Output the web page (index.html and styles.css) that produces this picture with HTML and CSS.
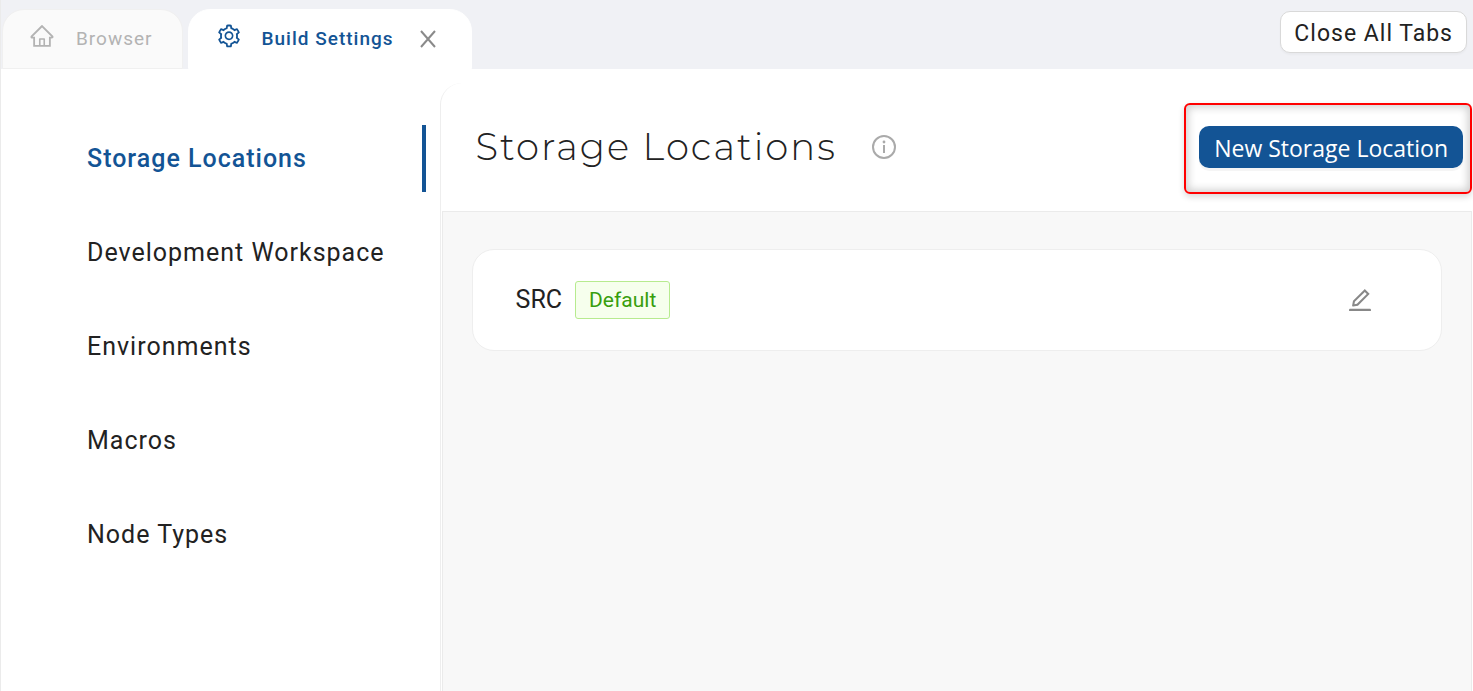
FILE: index.html
```html
<!DOCTYPE html>
<html lang="en">
<head>
<meta charset="utf-8">
<meta name="viewport" content="width=device-width, initial-scale=1">
<title>Build Settings</title>
<link rel="stylesheet" href="styles.css">
</head>
<body>
<div class="app">
  <header class="tabbar">
    <nav class="tabs" aria-label="Open tabs">
      <div class="tab">
        <svg class="tab-icon" viewBox="0 0 1024 1024" aria-hidden="true"><path d="M946.500 505L560.100 118.800l-25.900-25.900a31.500 31.500 0 0 0-44.400 0L77.500 505a63.900 63.900 0 0 0-18.800 46c.4 35.200 29.700 63.300 64.900 63.300h42.500V940h691.800V614.300h43.400c17.100 0 33.200-6.700 45.300-18.800a63.600 63.600 0 0 0 18.700-45.300c0-17-6.700-33.100-18.800-45.200zM568 868H456V664h112v204zm217.900-325.700V868H632V640c0-22.100-17.900-40-40-40H432c-22.100 0-40 17.900-40 40v228H238.100V542.300h-96l370-369.700 23.100 23.100L882 542.300h-96.100z"/></svg>
        <a class="tab-label" href="#browser">Browser</a>
      </div>
      <div class="tab tab-active">
        <svg class="tab-icon" viewBox="0 0 1024 1024" aria-hidden="true"><path d="M924.800 625.700l-65.500-56c3.100-19 4.700-38.400 4.700-57.800s-1.600-38.800-4.700-57.800l65.500-56a32.030 32.030 0 0 0 9.300-35.200l-.9-2.600a443.740 443.740 0 0 0-79.700-137.900l-1.800-2.100a32.120 32.120 0 0 0-35.100-9.500l-81.300 28.900c-30-24.600-63.500-44-99.700-57.600l-15.700-85a32.050 32.050 0 0 0-25.800-25.700l-2.700-.5c-52.100-9.400-106.900-9.400-159 0l-2.700.5a32.050 32.050 0 0 0-25.800 25.700l-15.800 85.400a351.860 351.860 0 0 0-99 57.400l-81.900-29.100a32 32 0 0 0-35.100 9.500l-1.800 2.100a446.020 446.020 0 0 0-79.700 137.900l-.9 2.600c-4.500 12.500-.8 26.500 9.300 35.200l66.300 56.600c-3.100 18.800-4.600 38-4.600 57.100 0 19.200 1.500 38.400 4.600 57.100L99 625.500a32.030 32.030 0 0 0-9.300 35.200l.9 2.600c18.100 50.400 44.900 96.900 79.700 137.900l1.800 2.100a32.120 32.120 0 0 0 35.100 9.500l81.900-29.100c29.800 24.500 63.100 43.900 99 57.400l15.800 85.400a32.050 32.050 0 0 0 25.800 25.700l2.700.5a449.400 449.400 0 0 0 159 0l2.700-.5a32.050 32.050 0 0 0 25.800-25.700l15.700-85a350 350 0 0 0 99.700-57.600l81.300 28.900a32 32 0 0 0 35.100-9.500l1.800-2.100c34.800-41.100 61.600-87.500 79.700-137.900l.9-2.600c4.500-12.300.8-26.300-9.300-35zM788.300 465.900c2.500 15.100 3.800 30.600 3.800 46.100s-1.300 31-3.800 46.100l-6.600 40.100 74.700 63.900a370.030 370.030 0 0 1-42.600 73.600L721 702.800l-31.400 25.800c-23.900 19.600-50.500 35-79.300 45.800l-38.100 14.300-17.900 97a377.500 377.500 0 0 1-85 0l-17.900-97.200-37.800-14.500c-28.500-10.800-55-26.200-78.700-45.700l-31.400-25.900-93.400 33.200c-17-22.900-31.200-47.600-42.600-73.600l75.500-64.500-6.500-40c-2.400-14.900-3.700-30.300-3.700-45.500 0-15.300 1.200-30.600 3.700-45.500l6.500-40-75.500-64.500c11.300-26.100 25.600-50.700 42.600-73.600l93.400 33.200 31.400-25.900c23.700-19.500 50.200-34.900 78.700-45.700l37.900-14.300 17.900-97.200c28.100-3.200 56.800-3.200 85 0l17.900 97 38.100 14.300c28.700 10.800 55.400 26.200 79.300 45.800l31.400 25.800 92.800-32.900c17 22.900 31.200 47.600 42.600 73.600L781.800 426l6.500 39.900zM512 326c-97.200 0-176 78.800-176 176s78.800 176 176 176 176-78.800 176-176-78.800-176-176-176zm79.200 255.200A111.600 111.600 0 0 1 512 614c-29.900 0-58-11.700-79.200-32.800A111.600 111.600 0 0 1 400 502c0-29.900 11.700-58 32.800-79.200C454 401.600 482.100 390 512 390c29.900 0 58 11.600 79.200 32.800A111.600 111.600 0 0 1 624 502c0 29.900-11.700 58-32.800 79.200z"/></svg>
        <a class="tab-label" href="#build-settings" aria-current="page">Build Settings</a>
        <button class="icon-button tab-close" type="button" aria-label="Close tab">
          <svg viewBox="0 0 16 18" width="16" height="18" aria-hidden="true"><path d="M1 1L15 17M15 1L1 17" fill="none" stroke="currentColor" stroke-width="2"/></svg>
        </button>
      </div>
    </nav>
    <button class="close-all" type="button">Close All Tabs</button>
  </header>

  <div class="workspace">
    <aside class="sidebar">
      <nav aria-label="Build settings">
        <ul class="menu">
          <li><a class="menu-item menu-item-active" href="#storage" aria-current="page">Storage Locations</a></li>
          <li><a class="menu-item" href="#workspace">Development Workspace</a></li>
          <li><a class="menu-item" href="#environments">Environments</a></li>
          <li><a class="menu-item" href="#macros">Macros</a></li>
          <li><a class="menu-item" href="#node-types">Node Types</a></li>
        </ul>
      </nav>
    </aside>

    <main class="panel">
      <div class="panel-head">
        <h1 class="title">Storage Locations</h1>
        <button class="icon-button info" type="button" aria-label="About storage locations">
          <svg viewBox="0 0 26 26" width="26" height="26" aria-hidden="true"><circle cx="13" cy="13" r="11" fill="none" stroke="currentColor" stroke-width="2"/><circle cx="13" cy="8" r="1.400" fill="currentColor"/><path d="M12 11h2v8h-2z" fill="currentColor"/></svg>
        </button>
        <div class="highlight">
          <button class="primary" type="button">New Storage Location</button>
        </div>
      </div>
      <div class="panel-body">
        <article class="card">
          <span class="card-name">SRC</span>
          <span class="tag">Default</span>
          <button class="icon-button edit" type="button" aria-label="Edit SRC">
            <svg viewBox="0 0 1024 1024" width="28" height="28" fill="currentColor" aria-hidden="true"><path d="M257.700 752c2 0 4-.2 6-.5L431.900 722c2-.4 3.900-1.300 5.300-2.800l423.900-423.900a9.960 9.960 0 0 0 0-14.100L694.900 114.900c-1.900-1.900-4.400-2.900-7.100-2.900s-5.200 1-7.100 2.900L256.800 538.800c-1.500 1.500-2.400 3.300-2.800 5.300l-29.500 168.200a33.500 33.500 0 0 0 9.400 29.800c6.600 6.400 14.900 9.900 23.800 9.900zm67.400-174.400L687.800 215l73.300 73.300-362.700 362.600-88.900 15.700 15.600-89zM880 836H144c-17.700 0-32 14.300-32 32v36c0 4.400 3.600 8 8 8h784c4.400 0 8-3.600 8-8v-36c0-17.700-14.300-32-32-32z"/></svg>
          </button>
        </article>
      </div>
    </main>
  </div>
</div>
</body>
</html>
```
FILE: styles.css
```css
:root {
  --blue: #135495;
  --ink: #222;
  --line: #ebebeb;
  --tracking: 1px;
}

* {
  box-sizing: border-box;
}

body {
  margin: 0;
  background: #fff;
  color: var(--ink);
  font-family: Roboto, "Liberation Sans", sans-serif;
  font-size: 25px;
  line-height: 32px;
}

a {
  color: inherit;
  text-decoration: none;
}

button {
  font: inherit;
  color: inherit;
  cursor: pointer;
}

.app {
  display: flex;
  flex-direction: column;
  min-height: 100vh;
  border-left: 1px solid var(--line);
}

.tabbar {
  display: flex;
  justify-content: space-between;
  align-items: flex-start;
  padding: 9px 6px 0 0;
  background: #f0f1f5;
}

.tabs {
  display: flex;
  gap: 5px;
  padding-left: 1px;
}

.tab {
  display: flex;
  align-items: center;
  height: 60px;
  padding: 0 29px 0 26px;
  border: 1px solid #f0f0f0;
  border-radius: 22px 22px 0 0;
  background: #fafafa;
  color: #b3b3b3;
  font-size: 19px;
  letter-spacing: var(--tracking);
}

.tab-active {
  padding: 0 35px 0 27px;
  border-color: #fff;
  background: #fff;
  color: var(--blue);
  font-weight: 500;
}

.tab-icon {
  width: 26px;
  height: 26px;
  margin: 0 21px 6px 0;
  fill: currentColor;
}

.tab-active .tab-icon {
  margin-right: 20px;
}

.icon-button {
  display: flex;
  padding: 0;
  border: 0;
  background: none;
}

.tab-close {
  margin-left: 26px;
  color: #8a8a8a;
}

.close-all {
  margin-top: 2px;
  padding: 6px 13px 2px;
  border: 1px solid #d9d9d9;
  border-radius: 10px;
  background: #fff;
  box-shadow: 0 2px 2px rgba(0, 0, 0, 0.03);
  font-size: 23px;
  letter-spacing: var(--tracking);
}

.workspace {
  display: flex;
  flex: 1;
}

.sidebar {
  flex: none;
  padding: 56px 14px 0 0;
}

.menu {
  display: flex;
  flex-direction: column;
  gap: 27px;
  margin: 0;
  padding: 0;
  list-style: none;
}

.menu-item {
  display: block;
  padding: 18px 37px 17px 86px;
  border-right: 4px solid transparent;
  letter-spacing: var(--tracking);
}

.menu-item-active {
  border-color: var(--blue);
  color: var(--blue);
  font-weight: 500;
}

.panel {
  display: flex;
  flex: 1;
  flex-direction: column;
  margin-top: 14px;
  padding: 0 1px 0 1px;
  border-left: 1px solid #eee;
  border-top-left-radius: 22px;
}

.panel-head {
  display: flex;
  align-items: center;
  min-height: 128px;
  padding-left: 34px;
}

.title {
  margin: 0;
  color: #222;
  font-family: Montserrat, Inter, sans-serif;
  font-size: 37px;
  font-weight: 300;
  line-height: 44px;
  letter-spacing: 2px;
}

.info {
  margin-left: 34px;
  color: #aaa;
}

.highlight {
  margin: 3px 0 0 auto;
  padding: 21px 7px 24px 13px;
  border: 2px solid #f00;
  border-radius: 6px;
  box-shadow: 0 3px 6px rgba(0, 0, 0, 0.15), inset 0 0 8px 2px rgba(0, 0, 0, 0.2);
}

.primary {
  display: block;
  padding: 6px 15px 4px;
  border: 0;
  border-radius: 10px;
  background: var(--blue);
  box-shadow: 0 3px 0 rgba(0, 0, 0, 0.04);
  color: #fff;
  font-family: "Segoe UI", "Open Sans", sans-serif;
  font-size: 23px;
}

.panel-body {
  flex: 1;
  padding: 37px 29px;
  border: 1px solid var(--line);
  border-bottom: 0;
  background: #f8f8f8;
}

.card {
  display: flex;
  align-items: center;
  min-height: 102px;
  padding: 0 67px 0 43px;
  border: 1px solid #eee;
  border-radius: 22px;
  background: #fff;
}

.tag {
  margin-left: 13px;
  padding: 2px 13px;
  border: 1px solid #b7eb8f;
  border-radius: 3px;
  background: #f6ffed;
  color: #389e0d;
  font-size: 21px;
}

.edit {
  margin-left: auto;
  color: #888;
}
```
